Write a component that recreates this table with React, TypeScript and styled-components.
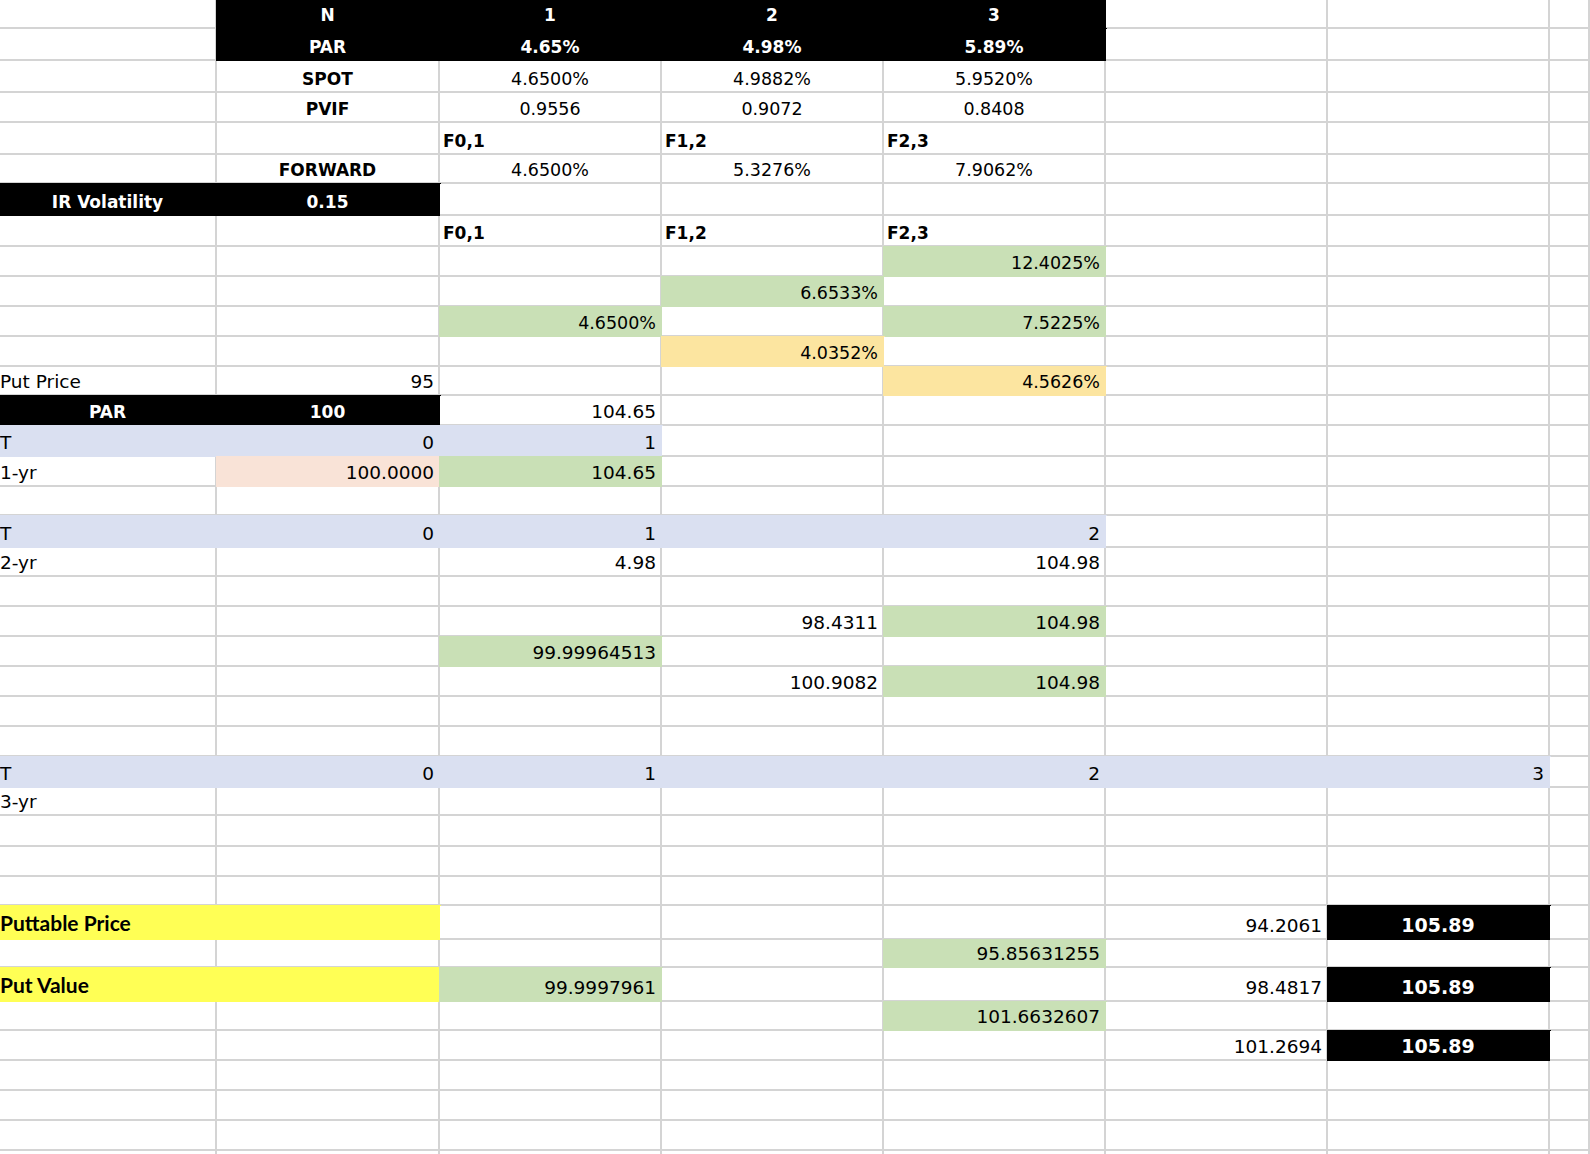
import React from "react";
import styled, { createGlobalStyle, css } from "styled-components";

const GlobalStyle = createGlobalStyle`
  html, body {
    margin: 0;
    padding: 0;
    background: #ffffff;
    overflow: hidden;
  }
  body {
    font-family: "DejaVu Sans", "Liberation Sans", sans-serif;
    color: #000000;
  }
`;

const FILLS = {
  none: "#ffffff",
  black: "#000000",
  green: "#C9E0B6",
  gold: "#FCE5A0",
  peach: "#F9E3D7",
  lav: "#DAE0F1",
  yellow: "#FFFF55",
};

const GRID = "#D4D4D4";
const COLUMNS = "217px 223px 222px 222px 222px 222px 222px 40px";

type Fill = keyof typeof FILLS;
type Kind = "num" | "pct" | "bold" | "total" | "big";
type Align = "left" | "center" | "right";

type CellSpec = {
  text?: string;
  kind?: Kind;
  align?: Align;
  fill?: Fill;
  inset?: number;
};

type RowSpec = {
  h: number;
  cells: CellSpec[];
};

const Sheet = styled.div`
  width: 1590px;
  height: 1154px;
  overflow: hidden;
  display: flex;
  flex-direction: column;
`;

const Row = styled.div<{ $h: number }>`
  flex: none;
  display: grid;
  grid-template-columns: ${COLUMNS};
  height: ${(p) => p.$h}px;
`;

const kindStyles = {
  num: css`
    font-size: 18.5px;
    font-weight: 400;
  `,
  pct: css`
    font-size: 17.5px;
    font-weight: 400;
  `,
  bold: css`
    font-size: 17px;
    font-weight: 700;
  `,
  total: css`
    font-size: 19px;
    font-weight: 700;
  `,
  big: css`
    font-family: Lato, "DejaVu Sans", sans-serif;
    font-size: 21px;
    font-weight: 700;
    padding-bottom: 5px;
  `,
};

const Cell = styled.div<{ $fill: Fill; $align: Align; $kind: Kind; $inset: number }>`
  box-sizing: border-box;
  display: flex;
  align-items: flex-end;
  justify-content: ${(p) =>
    p.$align === "left" ? "flex-start" : p.$align === "right" ? "flex-end" : "center"};
  padding: 0 ${(p) => (p.$align === "right" ? "4px" : "0")} 3px
    ${(p) => (p.$align === "left" ? `${p.$inset}px` : "0")};
  background: ${(p) => FILLS[p.$fill]};
  border-right: 2px solid ${(p) => (p.$fill === "none" ? GRID : FILLS[p.$fill])};
  border-bottom: 2px solid ${(p) => (p.$fill === "none" ? GRID : FILLS[p.$fill])};
  box-shadow: ${(p) => (p.$fill === "none" ? "none" : `0 0 0 1px ${FILLS[p.$fill]}`)};
  color: ${(p) => (p.$fill === "black" ? "#ffffff" : "#000000")};
  line-height: 1;
  white-space: nowrap;
  ${(p) => kindStyles[p.$kind]}
`;

// little builders for the cell specs
const e = (fill: Fill = "none"): CellSpec => ({ fill });
const head = (text: string, kind: Kind = "bold"): CellSpec => ({ text, kind, align: "center", fill: "black" });
const label = (text: string): CellSpec => ({ text, kind: "bold", align: "center" });
const fwd = (text: string): CellSpec => ({ text, kind: "bold", align: "left", inset: 3 });
const mid = (text: string): CellSpec => ({ text, kind: "pct", align: "center" });
const txt = (text: string, fill: Fill = "none"): CellSpec => ({ text, kind: "num", align: "left", fill });
const num = (text: string, fill: Fill = "none"): CellSpec => ({ text, kind: "num", align: "right", fill });
const pct = (text: string, fill: Fill = "none"): CellSpec => ({ text, kind: "pct", align: "right", fill });
const big = (text: string): CellSpec => ({ text, kind: "big", align: "left", fill: "yellow" });

const blank = (h: number): RowSpec => ({ h, cells: [] });

const ROWS: RowSpec[] = [
  { h: 29, cells: [e(), head("N"), head("1"), head("2"), head("3")] },
  { h: 32, cells: [e(), head("PAR"), head("4.65%"), head("4.98%"), head("5.89%")] },
  { h: 32, cells: [e(), label("SPOT"), mid("4.6500%"), mid("4.9882%"), mid("5.9520%")] },
  { h: 30, cells: [e(), label("PVIF"), mid("0.9556"), mid("0.9072"), mid("0.8408")] },
  { h: 32, cells: [e(), e(), fwd("F0,1"), fwd("F1,2"), fwd("F2,3")] },
  { h: 29, cells: [e(), label("FORWARD"), mid("4.6500%"), mid("5.3276%"), mid("7.9062%")] },
  { h: 32, cells: [head("IR Volatility"), head("0.15")] },
  { h: 31, cells: [e(), e(), fwd("F0,1"), fwd("F1,2"), fwd("F2,3")] },
  { h: 30, cells: [e(), e(), e(), e(), pct("12.4025%", "green")] },
  { h: 30, cells: [e(), e(), e(), pct("6.6533%", "green")] },
  { h: 30, cells: [e(), e(), pct("4.6500%", "green"), e(), pct("7.5225%", "green")] },
  { h: 30, cells: [e(), e(), e(), pct("4.0352%", "gold")] },
  { h: 29, cells: [txt("Put Price"), num("95"), e(), e(), pct("4.5626%", "gold")] },
  { h: 30, cells: [head("PAR"), head("100"), num("104.65")] },
  { h: 31, cells: [txt("T", "lav"), num("0", "lav"), num("1", "lav")] },
  { h: 30, cells: [txt("1-yr"), num("100.0000", "peach"), num("104.65", "green")] },
  blank(29),
  { h: 32, cells: [txt("T", "lav"), num("0", "lav"), num("1", "lav"), e("lav"), num("2", "lav")] },
  { h: 29, cells: [txt("2-yr"), e(), num("4.98"), e(), num("104.98")] },
  blank(30),
  { h: 30, cells: [e(), e(), e(), num("98.4311"), num("104.98", "green")] },
  { h: 30, cells: [e(), e(), num("99.99964513", "green")] },
  { h: 30, cells: [e(), e(), e(), num("100.9082"), num("104.98", "green")] },
  blank(30),
  blank(30),
  {
    h: 31,
    cells: [
      txt("T", "lav"),
      num("0", "lav"),
      num("1", "lav"),
      e("lav"),
      num("2", "lav"),
      e("lav"),
      num("3", "lav"),
    ],
  },
  { h: 28, cells: [txt("3-yr")] },
  blank(31),
  blank(30),
  blank(29),
  { h: 34, cells: [big("Puttable Price"), e("yellow"), e(), e(), e(), num("94.2061"), head("105.89", "total")] },
  { h: 28, cells: [e(), e(), e(), e(), num("95.85631255", "green")] },
  {
    h: 34,
    cells: [big("Put Value"), e("yellow"), num("99.9997961", "green"), e(), e(), num("98.4817"), head("105.89", "total")],
  },
  { h: 29, cells: [e(), e(), e(), e(), num("101.6632607", "green")] },
  { h: 30, cells: [e(), e(), e(), e(), e(), num("101.2694"), head("105.89", "total")] },
  blank(30),
  blank(30),
  blank(30),
  blank(30),
];

const COLUMN_COUNT = 8;

function SheetRow({ spec }: { spec: RowSpec }) {
  const cells = [...spec.cells];
  while (cells.length < COLUMN_COUNT) cells.push(e());
  return (
    <Row $h={spec.h}>
      {cells.map((c, i) => (
        <Cell
          key={i}
          $fill={c.fill ?? "none"}
          $align={c.align ?? "right"}
          $kind={c.kind ?? "num"}
          $inset={c.inset ?? 0}
        >
          {c.text}
        </Cell>
      ))}
    </Row>
  );
}

export default function App() {
  return (
    <>
      <GlobalStyle />
      <Sheet>
        {ROWS.map((r, i) => (
          <SheetRow key={i} spec={r} />
        ))}
      </Sheet>
    </>
  );
}
